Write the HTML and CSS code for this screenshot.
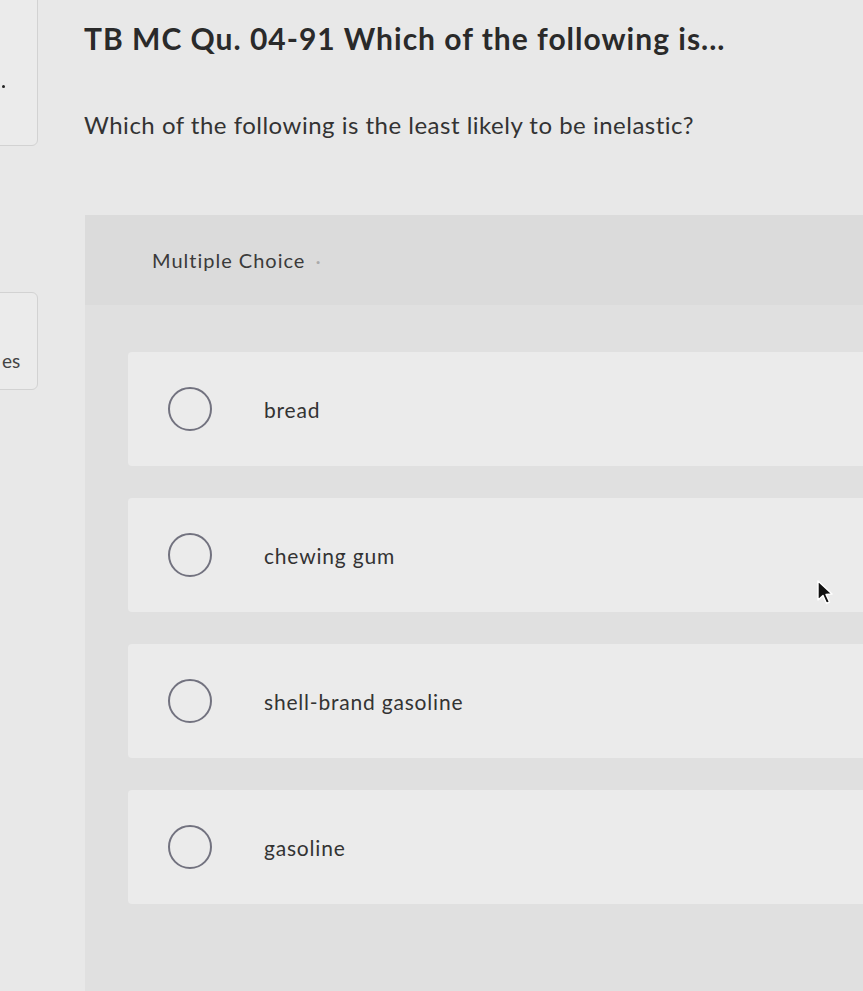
FILE: index.html
```html
<!DOCTYPE html>
<html lang="en">
<head>
  <meta charset="UTF-8" />
  <title>TB MC Qu. 04-91</title>
  <meta name="viewport" content="width=device-width, initial-scale=1" />
  <link rel="stylesheet" href="styles.css">
</head>
<body>

  <aside class="sidebar">
    <div class="side-card top"><span class="dot"></span></div>
    <div class="side-card res"><span class="side-label">es</span></div>
  </aside>

  <main class="main">
    <h1 class="title">TB MC Qu. 04-91 Which of the following is...</h1>
    <p class="question">Which of the following is the least likely to be inelastic?</p>

    <section class="choices">
      <div class="choices-head">Multiple Choice <span class="tick">&middot;</span></div>
      <div class="choices-body">
        <label class="option">
          <span class="radio"></span>
          <span class="option-text">bread</span>
        </label>
        <label class="option">
          <span class="radio"></span>
          <span class="option-text">chewing gum</span>
        </label>
        <label class="option">
          <span class="radio"></span>
          <span class="option-text">shell-brand gasoline</span>
        </label>
        <label class="option">
          <span class="radio"></span>
          <span class="option-text">gasoline</span>
        </label>
      </div>
    </section>
  </main>

  <!-- mouse pointer sitting over the page -->
  <svg class="cursor" width="18" height="26" viewBox="0 0 18 26">
    <path d="M2 1 L2 20 L7 15.5 L10.5 23.5 L13.5 22 L10 14.5 L16 14 Z" fill="#111" stroke="#fff" stroke-width="1.4" stroke-linejoin="round"/>
  </svg>

</body>
</html>
```

FILE: styles.css
```css
body {
  margin: 0;
  font-family: Lato, "Open Sans", sans-serif;
  background: #e8e8e8;
  color: #2e2e2e;
  display: flex;
  min-height: 991px;
  overflow: hidden;
}
.sidebar {
  width: 40px;
  flex-shrink: 0;
  overflow: hidden;
}
.side-card {
  position: relative;
  margin-left: -20px;
  width: 58px;
  border: 1px solid #d2d2d2;
  border-radius: 0 6px 6px 0;
  background: #ebebeb;
  box-sizing: border-box;
}
.side-card.top {
  height: 152px;
  margin-top: -6px;
}
.side-card.res {
  height: 98px;
  margin-top: 146px;
  display: flex;
  align-items: center;
  padding-top: 38px;
}
.dot {
  position: absolute;
  left: 21px;
  top: 90px;
  width: 3px;
  height: 3px;
  border-radius: 50%;
  background: #222;
}
.side-label {
  font-size: 19px;
  color: #444;
  margin-left: 21px;
}
.main {
  flex: 1;
  padding: 20px 0 0 44px;
}
.title {
  margin: 0;
  font-size: 30px;
  font-weight: 700;
  letter-spacing: 1px;
  line-height: 36px;
  color: #2a2a2a;
}
.question {
  margin: 54px 0 0;
  font-size: 24px;
  letter-spacing: 0.5px;
  line-height: 30px;
  color: #333;
}
.choices {
  margin-top: 75px;
  margin-left: 1px;
  background: #e0e0e0;
  min-height: 800px;
}
.choices-head {
  height: 90px;
  display: flex;
  align-items: center;
  padding-left: 67px;
  font-size: 20px;
  letter-spacing: 1px;
  color: #3a3a3a;
  background: #dbdbdb;
}
.tick {
  color: #aaa;
  margin-left: 10px;
}
.choices-body {
  display: flex;
  flex-direction: column;
  gap: 32px;
  padding: 47px 0 0 43px;
}
.option {
  height: 114px;
  display: flex;
  align-items: center;
  padding-left: 40px;
  background: #ebebeb;
  border-radius: 4px 0 0 4px;
  cursor: pointer;
}
.radio {
  width: 40px;
  height: 40px;
  border: 2px solid #72727f;
  border-radius: 50%;
  flex-shrink: 0;
}
.option-text {
  margin-left: 52px;
  font-size: 21px;
  letter-spacing: 0.8px;
  color: #333;
}
.cursor {
  position: absolute;
  left: 816px;
  top: 580px;
}
```
